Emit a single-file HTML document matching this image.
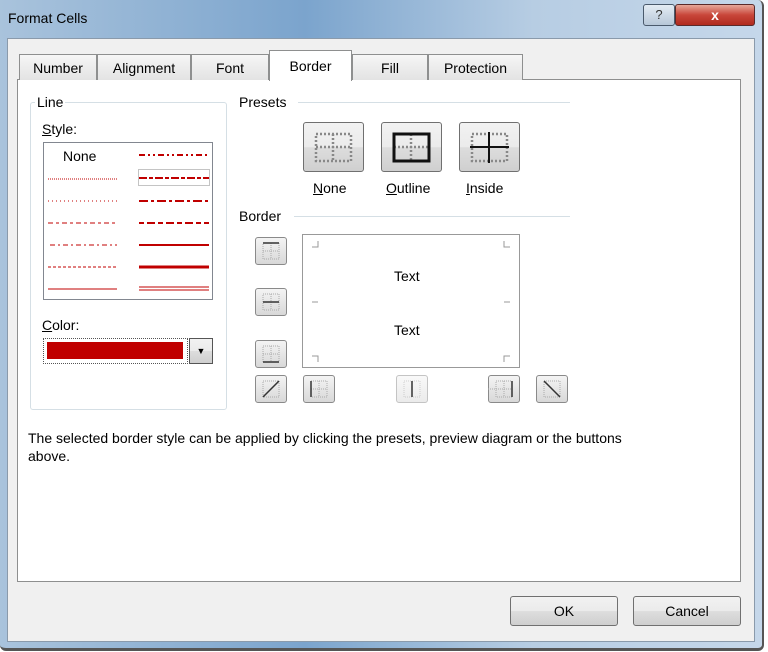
<!DOCTYPE html><html><head><style>
body{margin:0;width:768px;height:652px;overflow:hidden;background:#fff;font-family:"Liberation Sans",sans-serif;font-size:14px;color:#000}
.a{position:absolute}
.btn{position:absolute;border:1px solid #707070;border-radius:3px;background:linear-gradient(#f2f2f2 0%,#ebebeb 50%,#dddddd 51%,#cfcfcf 100%);box-sizing:border-box}
.tab{position:absolute;top:54px;height:26px;border:1px solid #8e8f8f;border-bottom:none;background:linear-gradient(#f6f6f6,#e3e3e3);box-sizing:border-box;text-align:center;line-height:26px;font-size:14px}
.sb{position:absolute;width:32px;height:28px;border:1px solid #8a8a8a;border-radius:3px;background:linear-gradient(#f4f4f4,#d8d8d8);box-sizing:border-box}
</style></head><body>
<div class="a" style="left:0;top:0;width:762px;height:648px;background:linear-gradient(90deg,#a9c3dc,#7ba4cd 40%,#b7cde3 70%,#c5d7ea);border-right:2px solid #555;border-bottom:3px solid #555;border-radius:0 6px 6px 6px"></div>
<div class="a" style="left:8px;top:10px;font-size:14px;color:#000">Format Cells</div>
<div class="a" style="left:643px;top:4px;width:30px;height:20px;border:1px solid #4a5a6c;border-radius:3px;background:linear-gradient(#e4ecf4,#b7c7d8);color:#333;text-align:center;font-size:13px;line-height:20px">?</div>
<div class="a" style="left:675px;top:4px;width:78px;height:20px;border:1px solid #5a2a2a;border-radius:3px;background:linear-gradient(#e6a89a,#c8463a 50%,#b02a1e);color:#fff;text-align:center;font-weight:bold;line-height:20px">x</div>
<div class="a" style="left:7px;top:38px;width:746px;height:602px;background:#f0f0f0;border:1px solid #8a9aab"></div>
<div class="a" style="left:17px;top:79px;width:722px;height:501px;background:#fff;border:1px solid #8e8f8f"></div>
<div class="tab" style="left:19px;width:78px">Number</div>
<div class="tab" style="left:97px;width:94px">Alignment</div>
<div class="tab" style="left:191px;width:78px">Font</div>
<div class="tab" style="left:352px;width:76px">Fill</div>
<div class="tab" style="left:428px;width:95px">Protection</div>
<div class="tab" style="left:269px;top:50px;height:31px;width:83px;background:#fff;line-height:30px">Border</div>
<div class="a" style="left:30px;top:102px;width:195px;height:306px;border:1px solid #d5dfe5;border-radius:3px"></div>
<div class="a" style="left:35px;top:94px;background:#fff;padding:0 2px">Line</div>
<div class="a" style="left:42px;top:121px"><u>S</u>tyle:</div>
<div class="a" style="left:43px;top:142px;width:170px;height:158px;border:1px solid #828790;box-sizing:border-box"></div>
<div class="a" style="left:63px;top:148px">None</div>
<svg class="a" style="left:43px;top:142px" width="170" height="158">
<g stroke="#c00000" fill="none">
<line x1="5" y1="37" x2="74" y2="37" stroke-dasharray="1,1" stroke-width="1"/>
<line x1="5" y1="59" x2="74" y2="59" stroke-dasharray="1,3" stroke-width="1"/>
<line x1="5" y1="81" x2="74" y2="81" stroke-dasharray="5,3,3,3" stroke-width="1"/>
<line x1="7" y1="103" x2="74" y2="103" stroke-dasharray="5,3,2,3" stroke-width="1"/>
<line x1="5" y1="125" x2="74" y2="125" stroke-dasharray="3,2" stroke-width="1"/>
<line x1="5" y1="147" x2="74" y2="147" stroke-width="1"/>
<line x1="96" y1="13" x2="164" y2="13" stroke-dasharray="6,3,2,3,2,3" stroke-width="2"/>
<line x1="96" y1="36" x2="166" y2="36" stroke-dasharray="8,2,4,2" stroke-width="2"/>
<line x1="96" y1="59" x2="166" y2="59" stroke-dasharray="9,3,3,3" stroke-width="2"/>
<line x1="96" y1="81" x2="166" y2="81" stroke-dasharray="5,3,8,3" stroke-width="2"/>
<line x1="96" y1="103" x2="166" y2="103" stroke-width="2"/>
<line x1="96" y1="125" x2="166" y2="125" stroke-width="3"/>
<line x1="96" y1="145" x2="166" y2="145" stroke-width="1"/>
<line x1="96" y1="148" x2="166" y2="148" stroke-width="1"/>
</g>
<rect x="95.5" y="27.5" width="71" height="16" fill="none" stroke="#888" stroke-dasharray="1,1"/>
</svg>
<div class="a" style="left:42px;top:317px"><u>C</u>olor:</div>
<div class="a" style="left:43px;top:338px;width:145px;height:26px;border:1px dotted #555;background:#fff;box-sizing:border-box"></div>
<div class="a" style="left:47px;top:342px;width:136px;height:17px;background:#c00000"></div>
<div class="btn" style="left:189px;top:338px;width:24px;height:26px;border-radius:0;border-color:#555;font-size:9px;text-align:center;line-height:24px">▼</div>
<div class="a" style="left:239px;top:94px">Presets</div>
<div class="a" style="left:298px;top:102px;width:272px;height:1px;background:#d5dfe5"></div>
<div class="btn" style="left:303px;top:122px;width:61px;height:50px"></div>
<div class="btn" style="left:381px;top:122px;width:61px;height:50px"></div>
<div class="btn" style="left:459px;top:122px;width:61px;height:50px"></div>
<svg class="a" style="left:303px;top:122px" width="220" height="50">
<g stroke="#888" stroke-dasharray="2,2" stroke-width="2.5" fill="none">
<rect x="13" y="12" width="35" height="27"/><line x1="30" y1="12" x2="30" y2="39"/><line x1="13" y1="25" x2="48" y2="25"/>
<line x1="108" y1="12" x2="108" y2="39"/><line x1="91" y1="25" x2="126" y2="25"/>
<rect x="169" y="12" width="35" height="27"/>
</g>
<rect x="91" y="12" width="35" height="27" fill="none" stroke="#111" stroke-width="3"/>
<line x1="186" y1="10" x2="186" y2="41" stroke="#111" stroke-width="2"/><line x1="167" y1="25" x2="206" y2="25" stroke="#111" stroke-width="2"/>
</svg>
<div class="a" style="left:313px;top:180px"><u>N</u>one</div>
<div class="a" style="left:386px;top:180px"><u>O</u>utline</div>
<div class="a" style="left:466px;top:180px"><u>I</u>nside</div>
<div class="a" style="left:239px;top:208px">Border</div>
<div class="a" style="left:294px;top:216px;width:276px;height:1px;background:#d5dfe5"></div>
<div class="a" style="left:302px;top:234px;width:218px;height:134px;border:1px solid #999;background:#fff;box-sizing:border-box"></div>
<div class="a" style="left:394px;top:268px">Text</div>
<div class="a" style="left:394px;top:322px">Text</div>
<svg class="a" style="left:302px;top:234px" width="218" height="134"><g stroke="#999" fill="none">
<path d="M10 13H16V7M202 7V13H208M10 68H16M202 68H208M10 122H16V128M202 128V122H208"/></g></svg>
<div class="sb" style="left:255px;top:237px"></div>
<div class="sb" style="left:255px;top:288px"></div>
<div class="sb" style="left:255px;top:340px"></div>
<div class="sb" style="left:255px;top:375px"></div>
<div class="sb" style="left:303px;top:375px"></div>
<div class="sb" style="left:396px;top:375px;opacity:.5"></div>
<div class="sb" style="left:488px;top:375px"></div>
<div class="sb" style="left:536px;top:375px"></div>
<svg class="a" style="left:255px;top:237px" width="320" height="170"><g stroke="#aaa" stroke-dasharray="1,1" fill="none">
<rect x="8" y="6" width="16" height="16"/><rect x="8" y="57" width="16" height="16"/><rect x="8" y="109" width="16" height="16"/>
<rect x="8" y="144" width="16" height="16"/><rect x="56" y="144" width="16" height="16"/><rect x="149" y="144" width="16" height="16" opacity=".5"/><rect x="241" y="144" width="16" height="16"/><rect x="289" y="144" width="16" height="16"/>
<path d="M16 6V22M8 14H24M16 57V73M16 109V125M8 117H24M64 144V160M56 152H72M249 144V160M233 152H257"/></g>
<g stroke="#333" stroke-width="1.5"><path d="M8 6H24M8 65H24M8 125H24M8 160L24 144M56 144V160M157 144V160M257 144V160M289 144L305 160"/></g></svg>
<div class="a" style="left:28px;top:429px;font-size:14px;line-height:18px;white-space:nowrap">The selected border style can be applied by clicking the presets, preview diagram or the buttons<br>above.</div>
<div class="btn" style="left:510px;top:596px;width:108px;height:30px;text-align:center;line-height:28px">OK</div>
<div class="btn" style="left:633px;top:596px;width:108px;height:30px;text-align:center;line-height:28px">Cancel</div>
</body></html>
